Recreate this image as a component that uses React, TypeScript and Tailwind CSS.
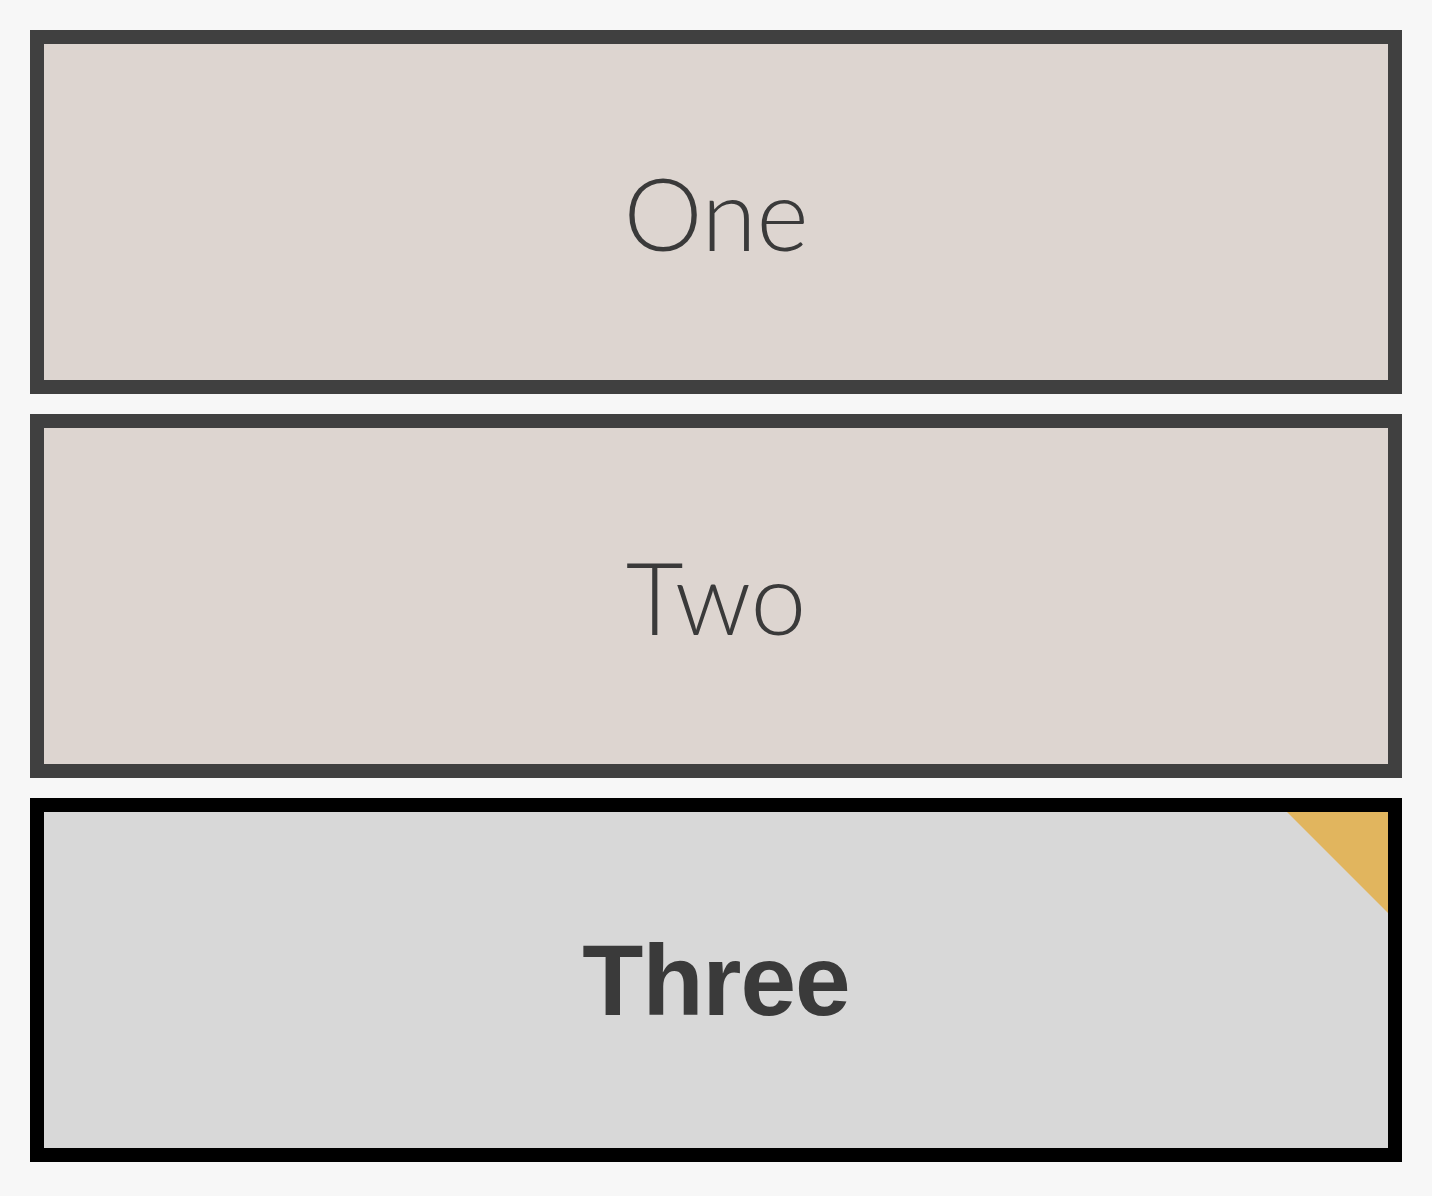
import React from "react";

interface Item {
  label: string;
  active?: boolean;
}

const ITEMS: Item[] = [
  { label: "One" },
  { label: "Two" },
  { label: "Three", active: true },
];

export default function App() {
  return (
    <div className="min-h-[1196px] bg-[#f7f7f7] px-[30px] pt-[30px] pb-[34px]">
      <div className="flex flex-col gap-[20px]">
        {ITEMS.map((item) => (
          <Card key={item.label} {...item} />
        ))}
      </div>
    </div>
  );
}

function Card({ label, active = false }: Item) {
  if (active) {
    return (
      <div className="relative flex h-[364px] items-center justify-center border-[14px] border-black bg-[#d8d8d8]">
        {/* corner flag */}
        <svg className="absolute right-0 top-0" width="101" height="101" viewBox="0 0 101 101">
          <polygon points="0,0 101,0 101,101" fill="#e1b55e" />
        </svg>
        <span className="font-['Liberation_Sans',Arial,sans-serif] text-[100px] font-bold leading-none tracking-[-1px] text-[#3a3a3a]">
          {label}
        </span>
      </div>
    );
  }
  return (
    <div className="flex h-[364px] items-center justify-center border-[14px] border-[#404040] bg-[#ddd5d0]">
      <span className="font-['Lato',sans-serif] text-[100px] font-light leading-none text-[#3a3a3a]">
        {label}
      </span>
    </div>
  );
}
